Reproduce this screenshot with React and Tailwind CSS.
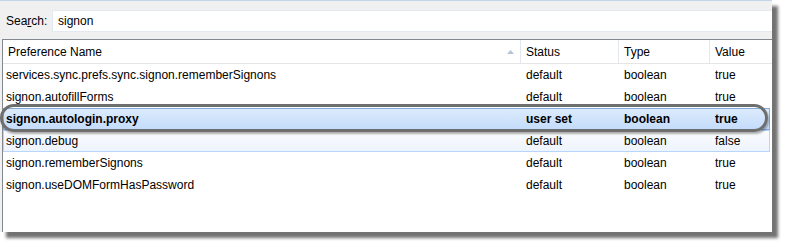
import React from "react";

const rows = [
  { name: "services.sync.prefs.sync.signon.rememberSignons", status: "default", type: "boolean", value: "true" },
  { name: "signon.autofillForms", status: "default", type: "boolean", value: "true" },
  { name: "signon.autologin.proxy", status: "user set", type: "boolean", value: "true", selected: true },
  { name: "signon.debug", status: "default", type: "boolean", value: "false", hover: true },
  { name: "signon.rememberSignons", status: "default", type: "boolean", value: "true" },
  { name: "signon.useDOMFormHasPassword", status: "default", type: "boolean", value: "true" },
];

const App = () => {
  return (
    <div
      className="w-[787px] h-[247px] bg-white overflow-hidden text-[12px] text-black"
      style={{ fontFamily: '"Liberation Sans", Arial, sans-serif' }}
    >
      <div className="relative w-[772px] h-[232px] bg-[#f0f0f0] border-t border-[#c6d6ea] shadow-[6px_6px_3px_rgba(0,0,0,0.55)] flex flex-col">
        {/* search bar */}
        <div className="flex items-center h-[38px] pt-[1px]">
          <span className="pl-[6px] w-[52px]">
            Sea<span className="underline">r</span>ch:
          </span>
          <div className="flex-1 h-[22px] bg-white border-y border-l border-[#e3e9ef] flex items-center pl-[5px]">
            signon
          </div>
        </div>

        {/* table */}
        <div className="relative flex-1 ml-[2px] bg-white border-l border-t border-[#828790]">
          {/* header */}
          <div className="flex h-[24px] border-b border-[#e5e5e5] items-center">
            <div className="w-[518px] h-full flex items-center justify-between pl-[5px] pr-[5px] border-r border-[#e3e8ee]">
              <span>Preference Name</span>
              <svg width="7" height="4" viewBox="0 0 7 4" className="mr-[1px]">
                <path d="M0 4 L3.5 0 L7 4 Z" fill="#b6c5d6" />
              </svg>
            </div>
            <div className="w-[98px] h-full flex items-center pl-[5px] border-r border-[#e3e8ee]">Status</div>
            <div className="w-[91px] h-full flex items-center pl-[5px] border-r border-[#e3e8ee]">Type</div>
            <div className="flex-1 h-full flex items-center pl-[5px]">Value</div>
          </div>

          {/* rows */}
          <div className="flex flex-col">
            {rows.map((r, i) => (
              <div
                key={i}
                className={
                  "flex h-[22px] items-center border " +
                  (r.selected
                    ? "border-[#84acdd] bg-gradient-to-b from-[#dcebfc] to-[#c4dcfb] font-bold mr-[2px]"
                    : r.hover
                    ? "border-[#b8d6fb] bg-gradient-to-b from-[#fafbfd] to-[#eef4fd] mr-[2px]"
                    : "border-transparent")
                }
              >
                <div className="w-[517px] pl-[2px] whitespace-nowrap">{r.name}</div>
                <div className="w-[98px] pl-[5px]">{r.status}</div>
                <div className="w-[91px] pl-[5px]">{r.type}</div>
                <div className="flex-1 pl-[5px]">{r.value}</div>
              </div>
            ))}
          </div>

          {/* annotation oval */}
          <div className="absolute left-[-3px] top-[64px] w-[768px] h-[28px] rounded-full border-[3px] border-[#6e6e6e] shadow-[1px_2px_2px_rgba(0,0,0,0.3)]" />
        </div>
      </div>
    </div>
  );
};

export default App;
